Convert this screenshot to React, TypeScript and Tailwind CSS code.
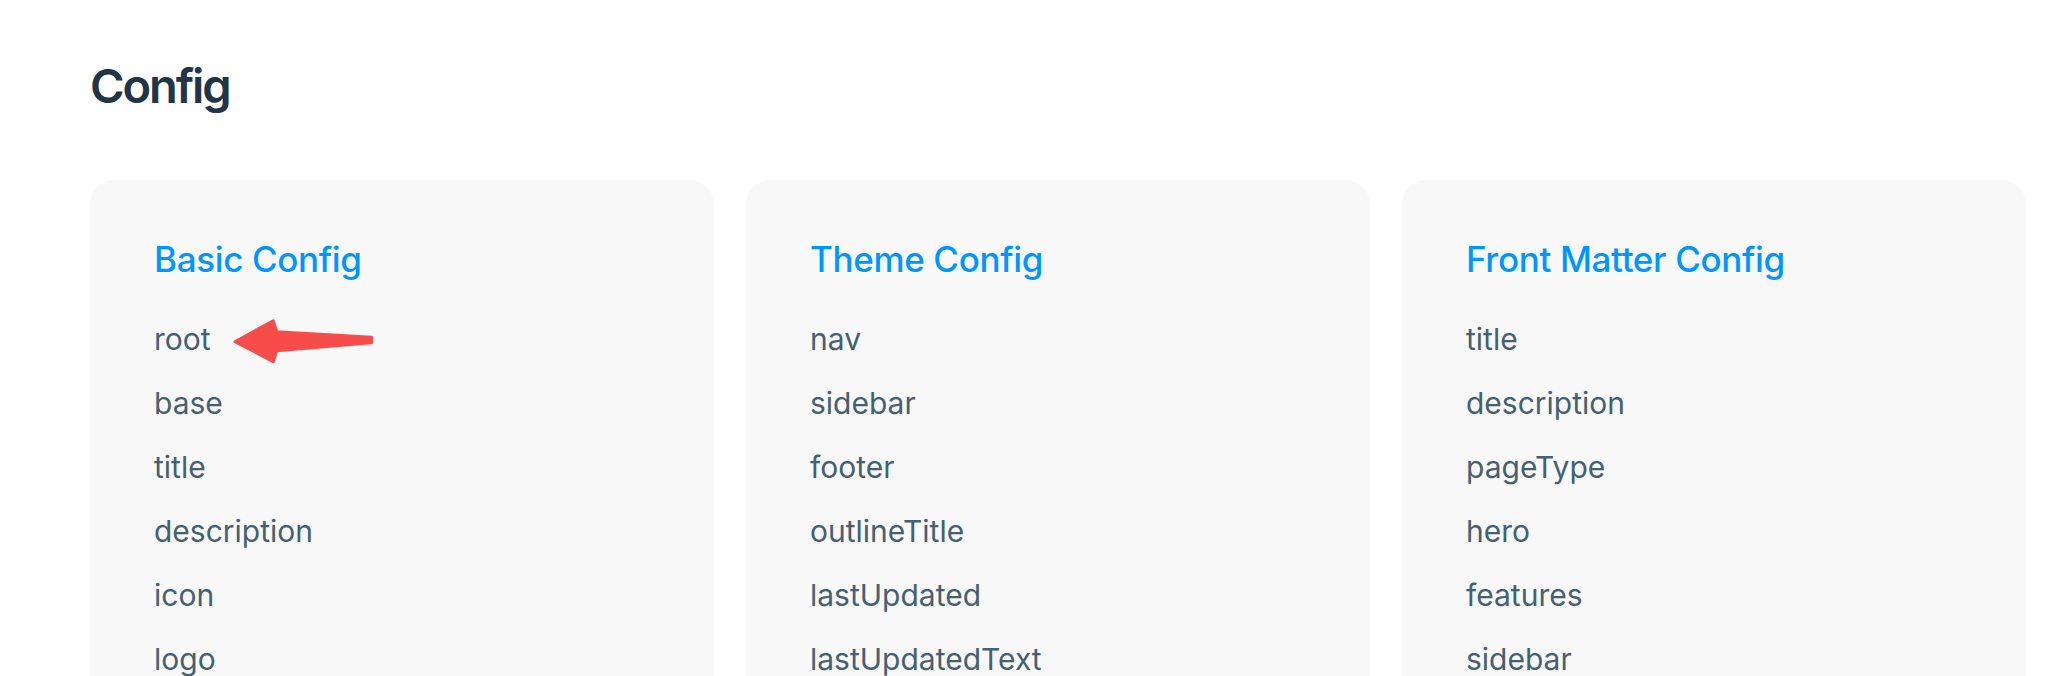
import React from "react";

type Section = {
  title: string;
  items: string[];
};

const sections: Section[] = [
  {
    title: "Basic Config",
    items: ["root", "base", "title", "description", "icon", "logo"],
  },
  {
    title: "Theme Config",
    items: ["nav", "sidebar", "footer", "outlineTitle", "lastUpdated", "lastUpdatedText"],
  },
  {
    title: "Front Matter Config",
    items: ["title", "description", "pageType", "hero", "features", "sidebar"],
  },
];

// the red pointer drawn over the first card
const Arrow: React.FC = () => (
  <svg
    className="absolute left-[138px] top-[134px]"
    width="150"
    height="54"
    viewBox="0 0 150 54">
    <path
      d="M7 27.7 L45.3 6.7 L48.7 17.7 L143.7 23.3 L143.7 28.7 L48.7 36.7 L45.3 47.7 Z"
      fill="#f64d4a"
      stroke="#f64d4a"
      strokeWidth="3"
      strokeLinejoin="round"
    />
  </svg>
);

const App: React.FC = () => {
  return (
    <div className="h-[676px] overflow-hidden bg-white font-['Inter',sans-serif]">
      <div className="pl-[90px] pr-[32px] pt-[62px]">
        <h1 className="text-[47px] leading-[48px] font-semibold tracking-[-0.045em] text-[#213547]">
          Config
        </h1>

        <div className="mt-[70px] grid grid-cols-3 gap-8">
          {sections.map((section, idx) => (
            <div
              key={section.title}
              className="relative rounded-3xl bg-[#f8f8f8] px-16 pt-[61px] pb-10">
              <h2 className="text-[35px] leading-[36px] font-medium tracking-[-0.01em] text-[#0096ff]">
                {section.title}
              </h2>
              <ul className="mt-[30px]">
                {section.items.map((item) => (
                  <li key={item} className="text-[30px] leading-[64px] text-[#456070]">
                    {item}
                  </li>
                ))}
              </ul>
              {idx === 0 && <Arrow />}
            </div>
          ))}
        </div>
      </div>
    </div>
  );
};

export default App;
